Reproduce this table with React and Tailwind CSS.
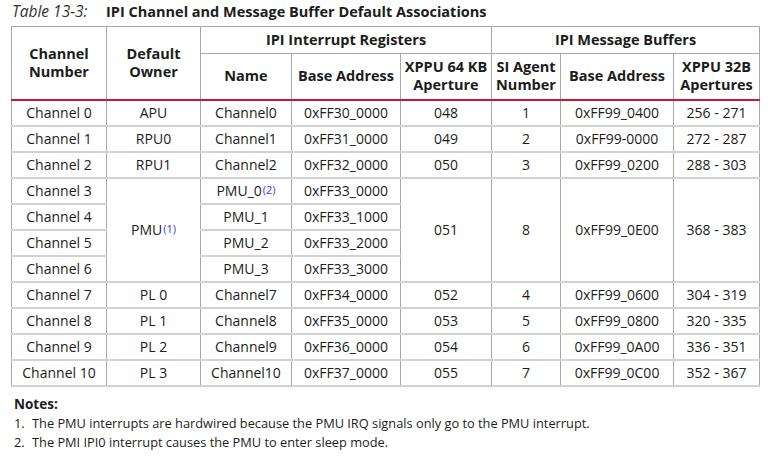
import React from "react";

const rows = [
  ["Channel 0", "APU", "Channel0", "0xFF30_0000", "048", "1", "0xFF99_0400", "256 - 271"],
  ["Channel 1", "RPU0", "Channel1", "0xFF31_0000", "049", "2", "0xFF99-0000", "272 - 287"],
  ["Channel 2", "RPU1", "Channel2", "0xFF32_0000", "050", "3", "0xFF99_0200", "288 - 303"],
];

const pmuRows = [
  ["Channel 3", "PMU_0", "0xFF33_0000"],
  ["Channel 4", "PMU_1", "0xFF33_1000"],
  ["Channel 5", "PMU_2", "0xFF33_2000"],
  ["Channel 6", "PMU_3", "0xFF33_3000"],
];

const plRows = [
  ["Channel 7", "PL 0", "Channel7", "0xFF34_0000", "052", "4", "0xFF99_0600", "304 - 319"],
  ["Channel 8", "PL 1", "Channel8", "0xFF35_0000", "053", "5", "0xFF99_0800", "320 - 335"],
  ["Channel 9", "PL 2", "Channel9", "0xFF36_0000", "054", "6", "0xFF99_0A00", "336 - 351"],
  ["Channel 10", "PL 3", "Channel10", "0xFF37_0000", "055", "7", "0xFF99_0C00", "352 - 367"],
];

// cellules : bordures verticales grises, horizontales plus claires
const td = "h-[26px] p-0 text-center align-middle border-x border-x-[#a8a8a8] border-y-2 border-y-[#d2d2d2]";
const th = "p-0 text-center align-middle font-bold text-[14.5px] leading-[18px] border border-[#a8a8a8]";
const thRed = th + " border-b-2 border-b-[#c8193c]";
const span4 = td + " border-y border-y-[#a8a8a8]";

const Sup = ({ n }) => (
  <sup className="text-[11px] text-[#3a3ae8] relative -top-[2px] ml-[1px]">({n})</sup>
);

export default function App() {
  return (
    <div className="w-[768px] h-[459px] bg-white text-[#1c1c1c] font-['Open_Sans',sans-serif] overflow-hidden">
      {/* Titre */}
      <div className="flex items-center h-[23px] pl-[12px]">
        <span className="italic text-[15.5px] text-[#333] w-[94px]">Table 13-3:</span>
        <span className="font-bold text-[14.5px]">IPI Channel and Message Buffer Default Associations</span>
      </div>

      {/* Tableau */}
      <table className="ml-[11px] mt-[3px] w-[748px] table-fixed border-collapse text-[14px]">
        <colgroup>
          <col className="w-[95px]" />
          <col className="w-[94px]" />
          <col className="w-[91px]" />
          <col className="w-[109px]" />
          <col className="w-[91px]" />
          <col className="w-[69px]" />
          <col className="w-[113px]" />
          <col className="w-[86px]" />
        </colgroup>
        <thead>
          <tr className="h-[27px]">
            <th rowSpan={2} className={thRed}>Channel<br />Number</th>
            <th rowSpan={2} className={thRed}>Default<br />Owner</th>
            <th colSpan={3} className={th}>IPI Interrupt Registers</th>
            <th colSpan={3} className={th}>IPI Message Buffers</th>
          </tr>
          <tr className="h-[46px]">
            <th className={thRed}>Name</th>
            <th className={thRed}>Base Address</th>
            <th className={thRed}>XPPU 64 KB<br />Aperture</th>
            <th className={thRed}>SI Agent<br />Number</th>
            <th className={thRed}>Base Address</th>
            <th className={thRed}>XPPU 32B<br />Apertures</th>
          </tr>
        </thead>
        <tbody>
          {rows.map((r) => (
            <tr key={r[0]}>
              {r.map((c, i) => (
                <td key={i} className={td}>{c}</td>
              ))}
            </tr>
          ))}
          {pmuRows.map((r, idx) => (
            <tr key={r[0]}>
              <td className={td}>{r[0]}</td>
              {idx === 0 && (
                <td rowSpan={4} className={span4}>
                  PMU<Sup n={1} />
                </td>
              )}
              <td className={td}>
                {r[1]}
                {idx === 0 && <Sup n={2} />}
              </td>
              <td className={td}>{r[2]}</td>
              {idx === 0 && (
                <>
                  <td rowSpan={4} className={span4}>051</td>
                  <td rowSpan={4} className={span4}>8</td>
                  <td rowSpan={4} className={span4}>0xFF99_0E00</td>
                  <td rowSpan={4} className={span4}>368 - 383</td>
                </>
              )}
            </tr>
          ))}
          {plRows.map((r) => (
            <tr key={r[0]}>
              {r.map((c, i) => (
                <td key={i} className={td}>{c}</td>
              ))}
            </tr>
          ))}
        </tbody>
      </table>

      {/* Notes */}
      <div className="pl-[14px] pt-[8px] text-[12.8px] leading-[19px]">
        <div className="font-bold text-[13.5px]">Notes:</div>
        <div className="flex">
          <span className="w-[18px]">1.</span>
          <span>The PMU interrupts are hardwired because the PMU IRQ signals only go to the PMU interrupt.</span>
        </div>
        <div className="flex">
          <span className="w-[18px]">2.</span>
          <span>The PMI IPI0 interrupt causes the PMU to enter sleep mode.</span>
        </div>
      </div>
    </div>
  );
}
